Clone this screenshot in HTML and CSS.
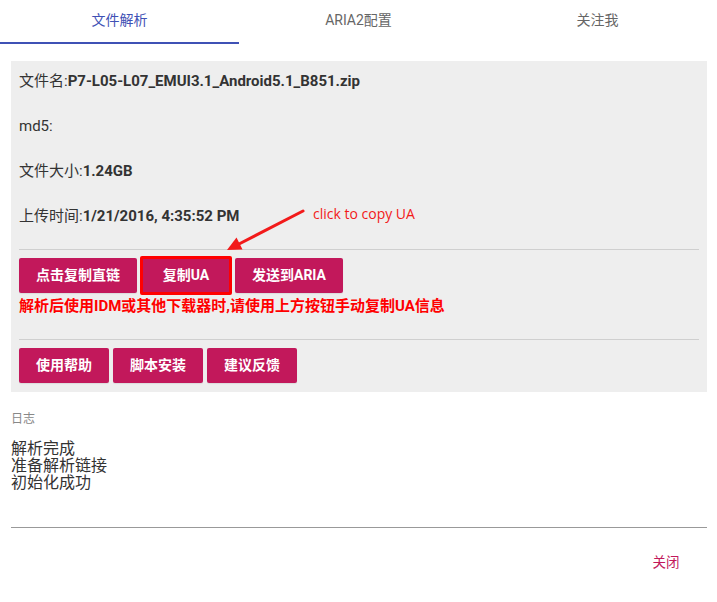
FILE: index.html
```html
<!DOCTYPE html>
<html lang="zh-CN">
<head>
<meta charset="utf-8">
<title>文件解析</title>
<link rel="stylesheet" href="styles.css">
</head>
<body>
<div class="page">
  <nav class="tabs">
    <div class="tab active">文件解析</div>
    <div class="tab">ARIA2配置</div>
    <div class="tab">关注我</div>
  </nav>

  <section class="panel">
    <div class="info-row">文件名:<b>P7-L05-L07_EMUI3.1_Android5.1_B851.zip</b></div>
    <div class="info-row">md5:</div>
    <div class="info-row">文件大小:<b>1.24GB</b></div>
    <div class="info-row last">上传时间:<b>1/21/2016, 4:35:52 PM</b></div>
    <div class="divider"></div>
    <div class="btn-row">
      <button class="btn">点击复制直链</button>
      <button class="btn">复制UA<span class="highlight"></span></button>
      <button class="btn">发送到ARIA</button>
    </div>
    <div class="warning">解析后使用IDM或其他下载器时,请使用上方按钮手动复制UA信息</div>
    <div class="divider"></div>
    <div class="btn-row">
      <button class="btn">使用帮助</button>
      <button class="btn">脚本安装</button>
      <button class="btn">建议反馈</button>
    </div>
  </section>

  <div class="log-label">日志</div>
  <div class="log">
    <div>解析完成</div>
    <div>准备解析链接</div>
    <div>初始化成功</div>
  </div>
  <div class="log-divider"></div>
  <div class="actions">
    <button class="close-btn">关闭</button>
  </div>

  <svg class="arrow" width="100" height="62" viewBox="0 0 100 62">
    <line x1="83" y1="16" x2="19" y2="49" stroke="#f21a1a" stroke-width="3" stroke-linecap="round"/>
    <polygon points="7,55 22.5,54.5 16.5,42.5" fill="#f21a1a"/>
  </svg>
  <span class="note">click to copy UA</span>
</div>
</body>
</html>
```

FILE: styles.css
```css
html, body {
  margin: 0;
  padding: 0;
  background: #fff;
}

body {
  font-family: Roboto, "Noto Sans CJK SC", sans-serif;
  color: #333;
}

.page {
  position: relative;
  width: 717px;
  height: 602px;
}

.tabs {
  display: flex;
  height: 44px;
}

.tab {
  flex: 1;
  text-align: center;
  font-size: 14px;
  line-height: 40px;
  height: 42px;
  color: #666;
  border-bottom: 2px solid transparent;
}

.tab.active {
  color: #3f51b5;
  border-bottom-color: #3f51b5;
}

.panel {
  margin: 17px 10px 0 11px;
  background: #eee;
  padding: 10px 8px 9px 8px;
}

.info-row {
  font-size: 15px;
  line-height: 20px;
  margin-bottom: 25px;
  color: #333;
}

.info-row.last {
  margin-bottom: 23px;
}

.info-row b {
  font-weight: 700;
  color: #333;
}

.divider {
  height: 1px;
  background: #cfcfcf;
  margin: 0 0 8px 0;
}

.btn-row {
  display: flex;
  gap: 4px;
}

.btn {
  position: relative;
  box-sizing: border-box;
  min-width: 90px;
  height: 35px;
  padding: 0 17px;
  border: none;
  border-radius: 2px;
  background: #c2185b;
  color: #fff;
  font-family: Roboto, "Noto Sans CJK SC", sans-serif;
  font-size: 14px;
  font-weight: 700;
  line-height: 35px;
  box-shadow: 0 1px 1px rgba(0, 0, 0, 0.08);
}

.highlight {
  position: absolute;
  top: -2px;
  bottom: -2px;
  left: -1px;
  right: -1px;
  border: 3px solid #ff0000;
  border-radius: 2px;
}

.warning {
  margin: 3px 0 23px 0;
  font-size: 15px;
  line-height: 20px;
  font-weight: 700;
  color: #ff0000;
}

.log-label {
  margin: 19px 11px 0;
  font-size: 12px;
  line-height: 16px;
  color: #888;
}

.log {
  margin: 13px 11px 0;
  font-size: 16px;
  line-height: 17px;
  color: #333;
}

.log-divider {
  margin: 36px 10px 0 11px;
  height: 1px;
  background: #999;
}

.actions {
  display: flex;
  justify-content: flex-end;
  padding: 16px 7px 0 0;
}

.close-btn {
  min-width: 88px;
  height: 36px;
  border: none;
  background: transparent;
  color: #c2185b;
  font-family: Roboto, "Noto Sans CJK SC", sans-serif;
  font-size: 13.5px;
  line-height: 36px;
  padding: 0;
}

.arrow {
  position: absolute;
  left: 220px;
  top: 195px;
}

.note {
  position: absolute;
  left: 313px;
  top: 206px;
  font-family: "Open Sans", sans-serif;
  font-size: 14px;
  line-height: 16px;
  color: #f21a1a;
}
```
